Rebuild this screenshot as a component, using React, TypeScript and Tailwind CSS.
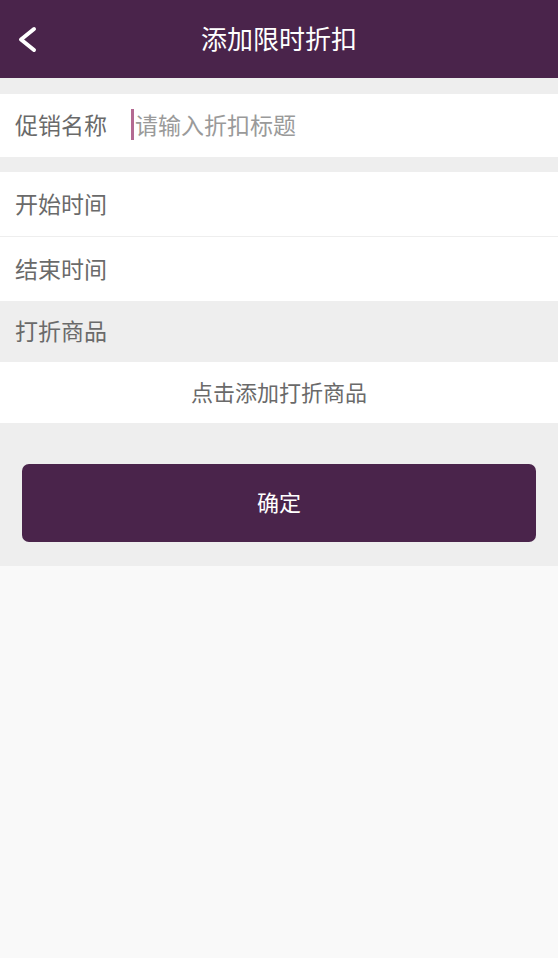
import React from 'react';

const font = { fontFamily: '"Noto Sans CJK SC", "Noto Sans", sans-serif' };

const Row = ({ label, children }: { label: string; children?: React.ReactNode }) => (
  <div className="flex h-[64px] items-center bg-white pb-[2px] pl-[15px]">
    <span className="text-[23px] text-[#6a6a6a]">{label}</span>
    {children}
  </div>
);

const App = () => {
  return (
    <div className="flex min-h-[958px] w-[558px] flex-col bg-[#f9f9f9]" style={font}>
      {/* header */}
      <div className="relative flex h-[78px] items-center justify-center bg-[#4a244b] pb-[4px]">
        <svg className="absolute left-[14px] top-[24px]" width="26" height="30" viewBox="0 0 26 30">
          <path d="M20 5 L7 15.5 L20 26" fill="none" stroke="white" strokeWidth="4" strokeLinecap="round" strokeLinejoin="round" />
        </svg>
        <span className="text-[26px] text-white">添加限时折扣</span>
      </div>

      <div className="h-[16px] bg-[#eeeeee]" />

      <div className="flex h-[63px] items-center bg-white pb-[2px] pl-[15px]">
        <span className="text-[23px] text-[#6a6a6a]">促销名称</span>
        <div className="ml-[24px] flex items-center">
          <span className="h-[31px] w-[3px] bg-[#b46a92]" />
          <span className="ml-[1px] text-[23px] text-[#9a9a9a]">请输入折扣标题</span>
        </div>
      </div>

      <div className="h-[15px] bg-[#eeeeee]" />

      <Row label="开始时间" />
      <div className="h-[1px] bg-[#eeeeee]" />
      <Row label="结束时间" />

      <div className="flex h-[61px] items-center bg-[#eeeeee] pb-[2px] pl-[15px]">
        <span className="text-[23px] text-[#6a6a6a]">打折商品</span>
      </div>

      <div className="flex h-[61px] items-center justify-center bg-white pb-[2px]">
        <span className="text-[22px] text-[#6a6a6a]">点击添加打折商品</span>
      </div>

      <div className="bg-[#eeeeee] px-[22px] pb-[24px] pt-[41px]">
        <button className="flex h-[78px] w-full items-center justify-center rounded-[7px] bg-[#4a244b] pb-[4px] text-[22px] text-white">
          确定
        </button>
      </div>
    </div>
  );
};

export default App;
